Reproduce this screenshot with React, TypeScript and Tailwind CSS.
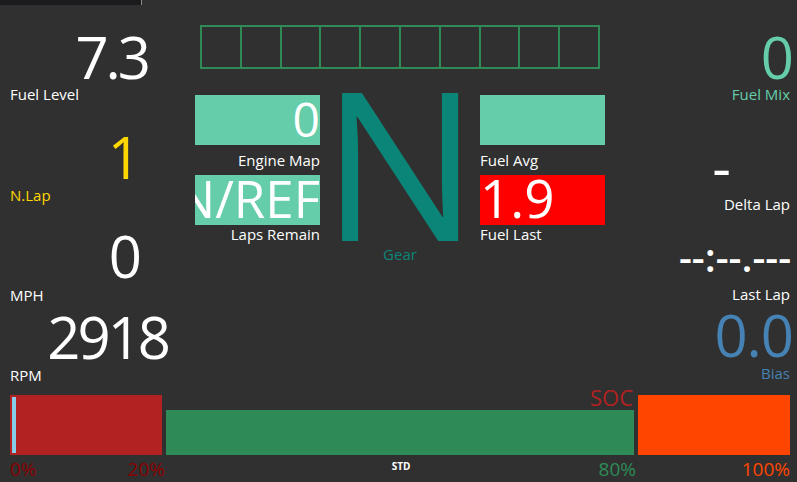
import React from "react";

const Cell = ({ first }: { first?: boolean }) => (
  <div className={first ? "flex-1" : "flex-1 border-l-2 border-[#2e8b57]"} />
);

export default function App() {
  return (
    <div className="w-[797px] h-[482px] bg-[#303030] text-white overflow-hidden flex flex-col font-['Open_Sans',sans-serif]">
      {/* top strip */}
      <div className="flex h-[5px] shrink-0">
        <div className="w-[141px] bg-[#1c1c1e]" />
        <div className="w-[1px] bg-[#8c8c8c]" />
      </div>

      {/* main */}
      <div className="flex h-[381px] shrink-0">
        {/* left column */}
        <div className="w-[190px] flex flex-col">
          <div className="mt-[23px] w-[148px] text-right text-[58px] leading-none h-[58px] tracking-[-3px]">7.3</div>
          <div className="mt-[1px] pl-[10px] text-[15px] leading-none h-[15px]">Fuel Level</div>
          <div className="mt-[26px] w-[141px] text-right text-[58px] leading-none h-[58px] text-[#ffd700]">1</div>
          <div className="mt-[2px] pl-[10px] text-[15px] leading-none h-[15px] text-[#ffd700]">N.Lap</div>
          <div className="mt-[24px] w-[142px] text-right text-[58px] leading-none h-[58px]">0</div>
          <div className="mt-[3px] pl-[10px] text-[15px] leading-none h-[15px]">MPH</div>
          <div className="mt-[5px] w-[168px] text-right text-[58px] leading-none h-[58px] tracking-[-3px]">2918</div>
          <div className="mt-[2px] pl-[10px] text-[15px] leading-none h-[15px]">RPM</div>
        </div>

        {/* center column */}
        <div className="w-[420px] flex flex-col">
          <div className="mt-[20px] ml-[10px] w-[400px] h-[44px] border-2 border-[#2e8b57] flex">
            <Cell first />
            <Cell />
            <Cell />
            <Cell />
            <Cell />
            <Cell />
            <Cell />
            <Cell />
            <Cell />
            <Cell />
          </div>

          <div className="mt-[26px] ml-[5px] w-[410px] flex">
            {/* left stack */}
            <div className="w-[125px] flex flex-col">
              <div className="h-[50px] bg-[#66cdaa] overflow-hidden flex justify-end">
                <span className="text-[48px] leading-[48px] whitespace-nowrap">0</span>
              </div>
              <div className="mt-[8px] text-right text-[15px] leading-none h-[15px]">Engine Map</div>
              <div className="mt-[7px] h-[50px] bg-[#66cdaa] overflow-hidden flex justify-end">
                <span className="text-[51px] leading-[47px] whitespace-nowrap">N/REF</span>
              </div>
              <div className="mt-[2px] text-right text-[15px] leading-none h-[15px]">Laps Remain</div>
            </div>

            {/* gear */}
            <div className="flex-1 flex flex-col items-center">
              <div className="-mt-[9px] h-[150px] text-[208px] leading-[150px] text-[#0b8577]">N</div>
              <div className="mt-[11px] text-[15px] leading-none text-[#0b8577]">Gear</div>
            </div>

            {/* right stack */}
            <div className="w-[125px] flex flex-col">
              <div className="h-[50px] bg-[#66cdaa]" />
              <div className="mt-[8px] text-[15px] leading-none h-[15px]">Fuel Avg</div>
              <div className="mt-[7px] h-[50px] bg-[#ff0000] overflow-hidden flex">
                <span className="text-[53px] leading-[46px] whitespace-nowrap">1.9</span>
              </div>
              <div className="mt-[2px] text-[15px] leading-none h-[15px]">Fuel Last</div>
            </div>
          </div>
        </div>

        {/* right column */}
        <div className="flex-1 flex flex-col items-end">
          <div className="mt-[23px] pr-[3px] text-[58px] leading-none h-[58px] text-[#66cdaa]">0</div>
          <div className="mt-[1px] pr-[7px] text-[15px] leading-none h-[15px] text-[#66cdaa]">Fuel Mix</div>
          <div className="mt-[36px] pr-[66px] text-[58px] leading-none h-[58px]">-</div>
          <div className="mt-[1px] pr-[7px] text-[15px] leading-none h-[15px]">Delta Lap</div>
          <div className="mt-[25px] pr-[6px] text-[40px] leading-none h-[40px] font-semibold whitespace-nowrap">--:--.---</div>
          <div className="mt-[10px] pr-[7px] text-[15px] leading-none h-[15px]">Last Lap</div>
          <div className="mt-[4px] pr-[4px] text-[58px] leading-none h-[58px] text-[#4682b4] tracking-[-1px]">0.0</div>
          <div className="mt-[2px] pr-[7px] text-[15px] leading-none h-[15px] text-[#4682b4]">Bias</div>
        </div>
      </div>

      {/* bottom SOC */}
      <div className="flex ml-[10px] gap-[4px]">
        <div className="w-[152px] flex flex-col">
          <div className="mt-[9px] h-[60px] bg-[#b22222] p-[2px] flex">
            <div className="w-[4px] bg-[#87ceeb]" />
          </div>
          <div className="mt-[5px] -mr-[3px] flex justify-between text-[19px] leading-none text-[#8b0000]">
            <span>0%</span>
            <span>20%</span>
          </div>
        </div>

        <div className="w-[468px] flex flex-col">
          <div className="text-right text-[22px] leading-none h-[22px] text-[#b22222] pr-[1px]">SOC</div>
          <div className="mt-[2px] h-[45px] bg-[#2e8b57]" />
          <div className="mt-[5px] -mr-[2px] grid grid-cols-3 items-start">
            <span />
            <span className="mt-[1px] text-center text-[10px] leading-none font-bold">STD</span>
            <span className="text-right text-[19px] leading-none text-[#2e8b57]">80%</span>
          </div>
        </div>

        <div className="w-[152px] flex flex-col">
          <div className="mt-[9px] h-[60px] bg-[#ff4500]" />
          <div className="mt-[5px] text-right text-[19px] leading-none text-[#ff4500]">100%</div>
        </div>
      </div>
    </div>
  );
}
